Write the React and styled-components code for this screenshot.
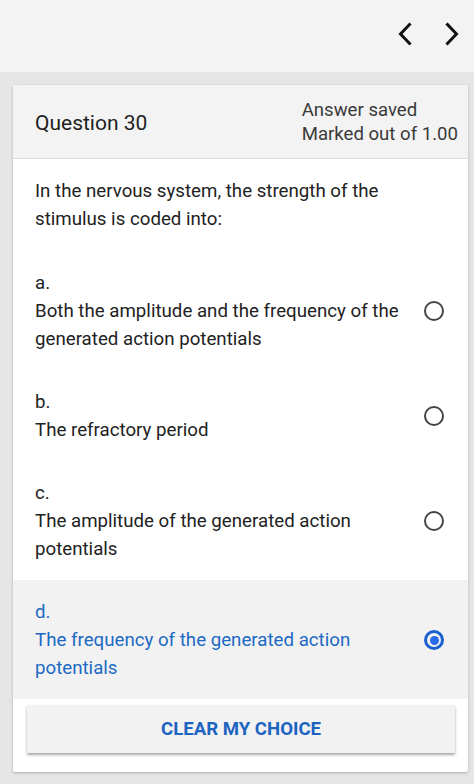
import React from "react";
import styled, { createGlobalStyle } from "styled-components";

const Global = createGlobalStyle`
  html, body { margin: 0; padding: 0; }
  body {
    background: #e6e6e6;
    font-family: Roboto, "Liberation Sans", sans-serif;
    color: #222;
    -webkit-font-smoothing: antialiased;
  }
`;

const Page = styled.div`
  width: 474px;
  min-height: 784px;
  background: #e6e6e6;
  display: flex;
  flex-direction: column;
`;

const TopBar = styled.div`
  height: 72px;
  background: #f3f3f3;
  display: flex;
  align-items: center;
  justify-content: flex-end;
  gap: 23px;
  padding-right: 10px;
  box-sizing: border-box;
`;

const NavButton = styled.button`
  border: 0;
  background: none;
  padding: 0;
  width: 24px;
  height: 24px;
  display: flex;
  align-items: center;
  justify-content: center;
  margin-top: -4px;
  color: #111;
`;

const Card = styled.div`
  margin: 13px 6px 12px 13px;
  background: #fff;
  box-shadow: 0 1px 3px rgba(0, 0, 0, 0.25);
  border-radius: 2px;
  display: flex;
  flex-direction: column;
`;

const Header = styled.div`
  background: #f3f3f3;
  height: 73px;
  border-bottom: 1px solid #dcdcdc;
  display: flex;
  align-items: center;
  justify-content: space-between;
  padding: 0 10px 0 22px;
`;

const Title = styled.div`
  font-size: 21px;
  color: #1e1e1e;
  margin-top: 2px;
`;

const Status = styled.div`
  font-size: 18.6px;
  line-height: 24px;
  color: #3a3a3a;
  margin-top: 1px;
`;

const Body = styled.div`
  display: flex;
  flex-direction: column;
  padding-top: 18px;
`;

const QuestionText = styled.div`
  font-size: 18.7px;
  line-height: 28px;
  padding: 0 22px 18px;
`;

const Option = styled.label`
  display: flex;
  align-items: center;
  justify-content: space-between;
  padding: 18px 24px 17px 22px;
  background: ${(p) => (p.$selected ? "#f2f2f2" : "transparent")};
  color: ${(p) => (p.$selected ? "#1d6ac4" : "#222")};
  font-size: 18.7px;
  line-height: 28px;
`;

const OptionText = styled.div`
  max-width: 372px;
`;

const Radio = styled.span`
  flex: none;
  width: 20px;
  height: 20px;
  border-radius: 50%;
  box-sizing: border-box;
  border: ${(p) => (p.$checked ? "3px solid #1a5fd0" : "2.5px solid #454545")};
  display: flex;
  align-items: center;
  justify-content: center;
  &::after {
    content: "";
    width: 9px;
    height: 9px;
    border-radius: 50%;
    background: #2b6ae8;
    display: ${(p) => (p.$checked ? "block" : "none")};
  }
`;

const Footer = styled.div`
  padding: 6px 13px 19px 14px;
`;

const ClearButton = styled.button`
  width: 100%;
  height: 48px;
  border: 0;
  background: #f2f2f2;
  box-shadow: 0 2px 3px rgba(0, 0, 0, 0.35);
  font-family: Roboto, "Liberation Sans", sans-serif;
  font-weight: 700;
  font-size: 18.6px;
  color: #1d63c2;
  letter-spacing: 0;
  border-radius: 1px;
`;

const Chevron = ({ dir }) => (
  <svg width="16" height="24" viewBox="0 0 16 24" fill="none">
    <path
      d={dir === "left" ? "M12.5 2.5 L3.5 12 L12.5 21.5" : "M3.5 2.5 L12.5 12 L3.5 21.5"}
      stroke="#111"
      strokeWidth="3"
      strokeLinecap="square"
      strokeLinejoin="miter"
    />
  </svg>
);

const options = [
  { key: "a", text: "Both the amplitude and the frequency of the generated action potentials" },
  { key: "b", text: "The refractory period" },
  { key: "c", text: "The amplitude of the generated action potentials" },
  { key: "d", text: "The frequency of the generated action potentials", selected: true },
];

export default function App() {
  return (
    <Page>
      <Global />
      <TopBar>
        <NavButton aria-label="previous">
          <Chevron dir="left" />
        </NavButton>
        <NavButton aria-label="next">
          <Chevron dir="right" />
        </NavButton>
      </TopBar>
      <Card>
        <Header>
          <Title>Question 30</Title>
          <Status>
            Answer saved
            <br />
            Marked out of 1.00
          </Status>
        </Header>
        <Body>
          <QuestionText>
            In the nervous system, the strength of the
            <br />
            stimulus is coded into:
          </QuestionText>
          {options.map((o) => (
            <Option key={o.key} $selected={o.selected}>
              <OptionText>
                {o.key}.
                <br />
                {o.text}
              </OptionText>
              <Radio $checked={o.selected} />
            </Option>
          ))}
        </Body>
        <Footer>
          <ClearButton>CLEAR MY CHOICE</ClearButton>
        </Footer>
      </Card>
    </Page>
  );
}
